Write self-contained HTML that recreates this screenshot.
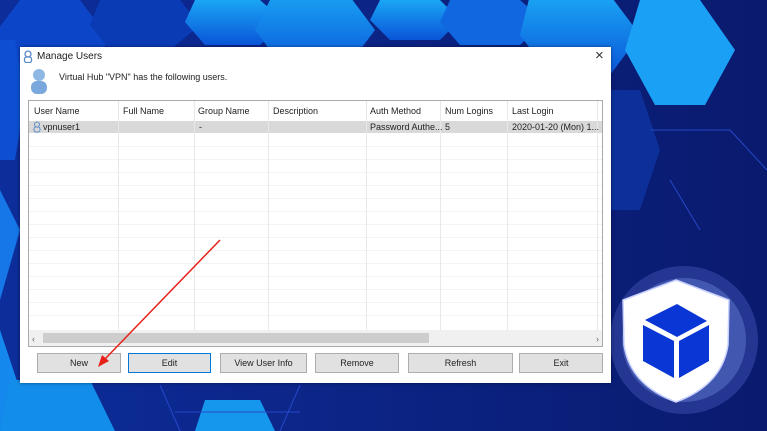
<!DOCTYPE html>
<html><head><style>
body{margin:0;width:767px;height:431px;overflow:hidden;position:relative;font-family:"Liberation Sans",sans-serif;background:#0b1a70}
#bg{position:absolute;left:0;top:0}
.dlg{position:absolute;left:20px;top:47px;width:591px;height:336px;background:#fff;box-shadow:0 0 3px rgba(0,0,0,.5)}
.t{position:absolute;font-size:9px;color:#222;white-space:nowrap}
.list{position:absolute;left:8px;top:53px;width:573px;height:245px;border:1px solid #aaa;background:#fff;overflow:hidden}
.col{position:absolute;top:0;bottom:16px;width:1px;background:#e8e8e8}
.row{position:absolute;left:0;right:0;height:1px;background:#f3f3f3}
.btn{position:absolute;top:306px;height:18px;background:#e1e1e1;border:1px solid #adadad;font-size:9px;text-align:center;line-height:18px;color:#222;box-sizing:content-box}
</style></head><body>
<svg id="bg" width="767" height="431" viewBox="0 0 767 431">
<defs><linearGradient id="g" x1="0" y1="0" x2="0" y2="1"><stop offset="0" stop-color="#1aa6f5"/><stop offset="1" stop-color="#0a55d8"/></linearGradient>
<linearGradient id="g2" x1="0" y1="0" x2="1" y2="0"><stop offset="0" stop-color="#0d2d9a"/><stop offset="1" stop-color="#0a1a6e"/></linearGradient></defs>
<rect width="767" height="431" fill="url(#g2)"/>
<g fill="url(#g)">
<polygon points="20,0 80,0 110,40 80,80 20,80 -10,40" fill="#0c45c8"/>
<polygon points="100,0 180,0 200,25 170,50 110,50 90,25" fill="#0a3bb5"/>
<polygon points="195,0 260,0 285,22 260,45 205,45 185,22"/>
<polygon points="275,-10 345,-10 375,30 345,70 285,70 255,30"/>
<polygon points="380,0 440,0 460,20 440,40 390,40 370,20"/>
<polygon points="450,0 520,0 545,22 520,45 460,45 440,22" fill="#1067e0"/>
<polygon points="530,-5 610,-5 640,35 610,75 550,75 520,35"/>
<polygon points="640,0 700,0 735,50 705,105 655,105 625,50" fill="#1aa0f5"/>
<polygon points="0,40 15,40 25,100 15,160 0,160" fill="#0d4fd0"/>
<polygon points="0,190 20,230 0,300" fill="#1577e8"/>
<polygon points="0,330 20,390 0,431" fill="#1488ec"/>
<polygon points="10,380 90,380 115,431 0,431" fill="#128de9"/>
<polygon points="205,400 260,400 275,431 195,431" fill="#1697ee"/>
<polygon points="590,90 640,90 660,150 640,210 610,210" fill="#0c2f9a"/>
</g>
<g stroke="#2648c8" stroke-width="1" fill="none">
<polyline points="160,385 180,431"/><polyline points="300,385 280,431"/><polyline points="175,412 300,412"/>
<polyline points="650,130 730,130 767,170"/><polyline points="670,180 700,230"/>
</g>
<circle cx="684" cy="340" r="74" fill="#2a3d9a" opacity=".8"/>
<circle cx="684" cy="340" r="62" fill="#4257b0"/>
<path d="M676,280 L729,300 L728,345 Q722,385 676,402 Q630,385 624,345 L623,300 Z" fill="#fff" stroke="#c8d0ff" stroke-width="1.5"/>
<path d="M677,304 L707,321 L677,337 L645,320 Z" fill="#0a36d6"/>
<path d="M643,325 L674,341 L674,378 L643,361 Z" fill="#0a36d6"/>
<path d="M679,341 L709,325 L709,361 L679,378 Z" fill="#0a36d6"/>
</svg>
<div class="dlg">
<svg style="position:absolute;left:3px;top:3px" width="10" height="13"><circle cx="5" cy="4" r="3" fill="none" stroke="#5b8cc7" stroke-width="1.3"/><rect x="1.5" y="7" width="7" height="5.5" rx="2" fill="none" stroke="#5b8cc7" stroke-width="1.3"/></svg>
<div class="t" style="left:17px;top:4px;font-size:10px">Manage Users</div>
<div class="t" style="left:575px;top:0px;font-size:15px;color:#333">×</div>
<svg style="position:absolute;left:9px;top:20px" width="20" height="28"><circle cx="10" cy="8" r="6" fill="#8fb7e3"/><rect x="2" y="14" width="16" height="13" rx="6" fill="#7aa8dc"/></svg>
<div class="t" style="left:39px;top:25px">Virtual Hub "VPN" has the following users.</div>
<div class="list">
<div style="position:absolute;left:0;right:0;top:20px;height:12px;background:#d9d9d9"></div>
<div class="row" style="top:45px"></div><div class="row" style="top:58px"></div><div class="row" style="top:71px"></div><div class="row" style="top:84px"></div><div class="row" style="top:97px"></div><div class="row" style="top:110px"></div><div class="row" style="top:123px"></div><div class="row" style="top:136px"></div><div class="row" style="top:149px"></div><div class="row" style="top:162px"></div><div class="row" style="top:175px"></div><div class="row" style="top:188px"></div><div class="row" style="top:201px"></div><div class="row" style="top:214px"></div>
<div class="col" style="left:89px"></div><div class="col" style="left:165px"></div><div class="col" style="left:239px"></div><div class="col" style="left:337px"></div><div class="col" style="left:411px"></div><div class="col" style="left:478px"></div><div class="col" style="left:568px"></div>
<div class="t" style="left:5px;top:5px">User Name</div><div class="t" style="left:94px;top:5px">Full Name</div><div class="t" style="left:169px;top:5px">Group Name</div><div class="t" style="left:244px;top:5px">Description</div><div class="t" style="left:341px;top:5px">Auth Method</div><div class="t" style="left:416px;top:5px">Num Logins</div><div class="t" style="left:483px;top:5px">Last Login</div>
<svg style="position:absolute;left:4px;top:20px" width="8" height="12"><circle cx="4" cy="3.5" r="2.5" fill="none" stroke="#5b8cc7"/><rect x="1" y="6" width="6" height="5" rx="2" fill="none" stroke="#5b8cc7"/></svg>
<div class="t" style="left:14px;top:21px">vpnuser1</div><div class="t" style="left:170px;top:21px">-</div><div class="t" style="left:341px;top:21px">Password Authe...</div><div class="t" style="left:416px;top:21px">5</div><div class="t" style="left:483px;top:21px">2020-01-20 (Mon) 1...</div>
<div style="position:absolute;left:0;right:0;bottom:0;height:16px;background:#f0f0f0"></div>
<div style="position:absolute;left:14px;width:386px;bottom:3px;height:10px;background:#cdcdcd"></div>
<div class="t" style="left:3px;bottom:2px;color:#666">‹</div><div class="t" style="right:3px;bottom:2px;color:#666">›</div>
</div>
<div class="btn" style="left:17px;width:82px">New</div>
<div class="btn" style="left:108px;width:81px;border-color:#0078d7;border-width:1px">Edit</div>
<div class="btn" style="left:200px;width:85px">View User Info</div>
<div class="btn" style="left:295px;width:82px">Remove</div>
<div class="btn" style="left:388px;width:103px">Refresh</div>
<div class="btn" style="left:499px;width:82px">Exit</div>
</div>
<svg style="position:absolute;left:0;top:0" width="767" height="431"><line x1="220" y1="240" x2="104" y2="360" stroke="#e8201a" stroke-width="1.5"/><polygon points="98,367 102,355 109,361" fill="#e8201a"/></svg>
</body></html>
